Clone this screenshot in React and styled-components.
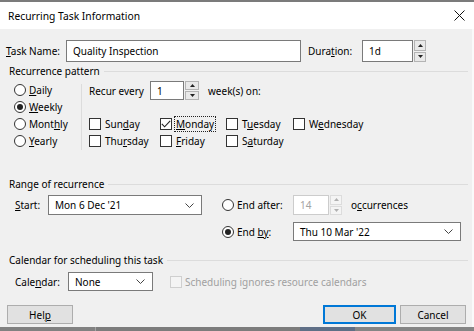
import React from "react"
import styled, {createGlobalStyle} from "styled-components"

const days = [
    {pre: "Sun", key: "d", post: "ay"},
    {pre: "", key: "M", post: "onday", checked: true, focus: true},
    {pre: "T", key: "u", post: "esday"},
    {pre: "W", key: "e", post: "dnesday"},
    {pre: "Thu", key: "r", post: "sday"},
    {pre: "", key: "F", post: "riday"},
    {pre: "S", key: "a", post: "turday"},
]

const patterns = [
    {pre: "", key: "D", post: "aily"},
    {pre: "", key: "W", post: "eekly", selected: true},
    {pre: "Mont", key: "h", post: "ly"},
    {pre: "", key: "Y", post: "early"},
]

const Chevron = () => (
    <svg width="9" height="5" viewBox="0 0 9 5">
        <path d="M0.5 0.5 L4.5 4.5 L8.5 0.5" fill="none" stroke="#444" strokeWidth="1"/>
    </svg>
)

const Spinner = ({disabled, height, width}) => (
    <SpinBox $h={height} $w={width}>
        <SpinHalf $disabled={disabled}><svg width="5" height="3" viewBox="0 0 5 3"><path d="M0 3 L2.5 0 L5 3 Z"/></svg></SpinHalf>
        <SpinHalf $disabled={disabled}><svg width="5" height="3" viewBox="0 0 5 3"><path d="M0 0 L2.5 3 L5 0 Z"/></svg></SpinHalf>
    </SpinBox>
)

const Label = ({pre, k, post}) => (<span>{pre}<Key>{k}</Key>{post}</span>)

const App = () => {
    return (
        <Window>
            <GlobalStyle/>
            <TopEdge/>
            <TitleBar>
                <span>Recurring Task Information</span>
                <svg width="11" height="11" viewBox="0 0 11 11">
                    <path d="M0.5 0.5 L10.5 10.5 M10.5 0.5 L0.5 10.5" stroke="#111" strokeWidth="1"/>
                </svg>
            </TitleBar>

            <Body>
                <TaskRow>
                    <FieldLabel $w={60}><Label pre="" k="T" post="ask Name:"/></FieldLabel>
                    <TextBox $w={235}>Quality Inspection</TextBox>
                    <FieldLabel $w={54} style={{marginLeft: 7}}><Label pre="Dura" k="t" post="ion:"/></FieldLabel>
                    <TextBox $w={51}>1d</TextBox>
                    <Spinner height={22}/>
                </TaskRow>

                <GroupHeader>Recurrence pattern</GroupHeader>

                <PatternArea>
                    <RadioColumn>
                        {patterns.map(p => (
                            <RadioRow key={p.post}>
                                <Radio $on={p.selected}/>
                                <Label pre={p.pre} k={p.key} post={p.post}/>
                            </RadioRow>
                        ))}
                    </RadioColumn>
                    <VSep/>
                    <RightColumn>
                        <RecurRow>
                            <FieldLabel $w={61}>Recur every</FieldLabel>
                            <TextBox $w={34} $h={19}>1</TextBox>
                            <Spinner height={19} width={14}/>
                            <span style={{marginLeft: 9}}>week(s) on:</span>
                        </RecurRow>
                        <DayGrid>
                            {days.map(d => (
                                <DayCheck key={d.post}>
                                    <CheckBox>
                                        {d.checked && (
                                            <svg width="10" height="8" viewBox="0 0 10 8">
                                                <path d="M0.8 3.8 L3.6 6.8 L9.2 0.8" fill="none" stroke="#222" strokeWidth="1.1"/>
                                            </svg>
                                        )}
                                    </CheckBox>
                                    <DayText $focus={d.focus}><Label pre={d.pre} k={d.key} post={d.post}/></DayText>
                                </DayCheck>
                            ))}
                        </DayGrid>
                    </RightColumn>
                </PatternArea>

                <GroupHeader style={{marginTop: 27}}>Range of recurrence</GroupHeader>

                <RangeGrid>
                    <span><Label pre="" k="S" post="tart:"/></span>
                    <Combo>Mon 6 Dec '21<Chevron/></Combo>
                    <RadioRow>
                        <Radio/>
                        <span>End after:</span>
                    </RadioRow>
                    <EndAfter>
                        <TextBox $w={36} $h={20} $disabled>14</TextBox>
                        <Spinner height={20} disabled/>
                        <span style={{marginLeft: 9}}>o<Key>c</Key>currences</span>
                    </EndAfter>
                    <span/>
                    <span/>
                    <RadioRow>
                        <Radio $on/>
                        <span>End <Key>by</Key>:</span>
                    </RadioRow>
                    <Combo $h={19}>Thu 10 Mar '22<Chevron/></Combo>
                </RangeGrid>

                <GroupHeader style={{marginTop: 12}}>Calendar for scheduling this task</GroupHeader>

                <CalendarRow>
                    <FieldLabel $w={53}><Label pre="Cale" k="n" post="dar:"/></FieldLabel>
                    <Combo $w={85} $h={19}>None<Chevron/></Combo>
                    <CheckBox $disabled style={{marginLeft: 17}}/>
                    <Disabled>Scheduling ignores resource calendars</Disabled>
                </CalendarRow>

                <ButtonRow>
                    <Button $w={66}><Label pre="Hel" k="p" post=""/></Button>
                    <Button $w={73} $default style={{marginLeft: "auto"}}>OK</Button>
                    <Button $w={66}>Cancel</Button>
                </ButtonRow>
            </Body>
            <BottomEdge/>
        </Window>
    )
}

export default App


//-----------------------------------------------STYLES-----------------------------------------------//

const GlobalStyle = createGlobalStyle`
    html, body {
        margin: 0;
        padding: 0;
        background: #f0f0f0;
    }
    body {
        font-family: "Noto Sans", "Open Sans", sans-serif;
        font-size: 10px;
        color: #000;
    }
`

const Window = styled.div`
    width: 474px;
    height: 331px;
    display: flex;
    flex-direction: column;
    overflow: hidden;
`
const TopEdge = styled.div`
    height: 2px;
    background: #7b7b7b;
`
const TitleBar = styled.div`
    height: 27px;
    background: #fff;
    display: flex;
    align-items: center;
    justify-content: space-between;
    padding: 0 9px 0 8px;
    font-size: 10.3px;
`
const Body = styled.div`
    flex: 1;
    background: #f0f0f0;
    border-right: 2px solid #fafafa;
    padding: 11px 0 0 6px;
    display: flex;
    flex-direction: column;
`
const BottomEdge = styled.div`
    height: 4px;
    background: linear-gradient(to right, #818181 0 95px, #a4a4a4 95px 96px, #7c7c7c 96px 300px, #5f6f86 300px 355px, #858585 355px);
`
const Key = styled.u`
    text-underline-offset: 1px;
`
const TaskRow = styled.div`
    height: 22px;
    display: flex;
    align-items: center;
`
const FieldLabel = styled.span`
    width: ${p => p.$w}px;
    flex-shrink: 0;
`
const TextBox = styled.div`
    width: ${p => p.$w}px;
    height: ${p => p.$h || 22}px;
    box-sizing: border-box;
    border: 1px solid ${p => p.$disabled ? "#cccccc" : "#7a7a7a"};
    background: #fff;
    color: ${p => p.$disabled ? "#a3a3a3" : "#000"};
    display: flex;
    align-items: center;
    padding-left: 6px;
    flex-shrink: 0;
`
const SpinBox = styled.div`
    width: ${p => p.$w || 12}px;
    height: ${p => p.$h}px;
    margin-left: 1px;
    display: flex;
    flex-direction: column;
    gap: 1px;
    flex-shrink: 0;
`
const SpinHalf = styled.div`
    flex: 1;
    box-sizing: border-box;
    border: 1px solid ${p => p.$disabled ? "#dcdcdc" : "#b4b4b4"};
    background: ${p => p.$disabled ? "#f4f4f4" : "#e9e9e9"};
    display: flex;
    align-items: center;
    justify-content: center;
    fill: ${p => p.$disabled ? "#b0b0b0" : "#222"};
`
const GroupHeader = styled.div`
    margin: 2px 4px 0 3px;
    height: 14px;
    display: flex;
    align-items: center;
    gap: 4px;
    &::after {
        content: "";
        flex: 1;
        height: 1px;
        background: #dcdcdc;
    }
`
const PatternArea = styled.div`
    margin-top: 3px;
    display: flex;
`
const RadioColumn = styled.div`
    width: 75px;
    padding-left: 8px;
    box-sizing: border-box;
    display: flex;
    flex-direction: column;
`
const RadioRow = styled.div`
    height: 17px;
    display: flex;
    align-items: center;
    gap: 3px;
`
const Radio = styled.div`
    width: 12px;
    height: 12px;
    box-sizing: border-box;
    border-radius: 50%;
    border: 1px solid #333;
    background: #fff;
    display: flex;
    align-items: center;
    justify-content: center;
    flex-shrink: 0;
    &::after {
        content: "";
        width: 6px;
        height: 6px;
        border-radius: 50%;
        background: ${p => p.$on ? "#222" : "transparent"};
    }
`
const VSep = styled.div`
    width: 1px;
    height: 66px;
    margin-top: 3px;
    background: #dcdcdc;
`
const RightColumn = styled.div`
    padding-left: 7px;
    display: flex;
    flex-direction: column;
`
const RecurRow = styled.div`
    height: 19px;
    display: flex;
    align-items: center;
`
const DayGrid = styled.div`
    margin-top: 15px;
    display: grid;
    grid-template-columns: 71px 66px 67px auto;
    grid-auto-rows: 17px;
`
const DayCheck = styled.div`
    display: flex;
    align-items: center;
    gap: 3px;
`
const CheckBox = styled.div`
    width: 12px;
    height: 12px;
    box-sizing: border-box;
    border: 1px solid ${p => p.$disabled ? "#cfcfcf" : "#333"};
    background: ${p => p.$disabled ? "#f4f4f4" : "#fff"};
    display: flex;
    align-items: center;
    justify-content: center;
    flex-shrink: 0;
`
const DayText = styled.span`
    padding: 0 1px;
    outline: ${p => p.$focus ? "1px dotted #222" : "none"};
`
const RangeGrid = styled.div`
    margin-top: 4px;
    padding-left: 9px;
    display: grid;
    grid-template-columns: 33px 165px 80px auto;
    grid-template-rows: 20px 19px;
    row-gap: 7px;
    align-items: center;
    & > :nth-child(3), & > :nth-child(7) {
        margin-left: 9px;
    }
`
const EndAfter = styled.div`
    display: flex;
    align-items: center;
`
const Combo = styled.div`
    width: ${p => p.$w ? `${p.$w}px` : "auto"};
    height: ${p => p.$h || 20}px;
    box-sizing: border-box;
    border: 1px solid #7a7a7a;
    background: #fff;
    display: flex;
    align-items: center;
    justify-content: space-between;
    padding: 0 7px 0 6px;
    margin-right: ${p => p.$w ? 0 : 11}px;
`
const CalendarRow = styled.div`
    margin-top: 5px;
    padding-left: 9px;
    height: 19px;
    display: flex;
    align-items: center;
`
const Disabled = styled.span`
    margin-left: 3px;
    color: #a0a0a0;
`
const ButtonRow = styled.div`
    margin-top: 14px;
    padding: 0 6px 0 1px;
    display: flex;
    gap: 4px;
`
const Button = styled.div`
    width: ${p => p.$w}px;
    height: 19px;
    box-sizing: border-box;
    border: 1px solid ${p => p.$default ? "#0078d7" : "#adadad"};
    box-shadow: ${p => p.$default ? "inset 0 0 0 1px #0078d7" : "none"};
    background: #e1e1e1;
    display: flex;
    align-items: center;
    justify-content: center;
`
